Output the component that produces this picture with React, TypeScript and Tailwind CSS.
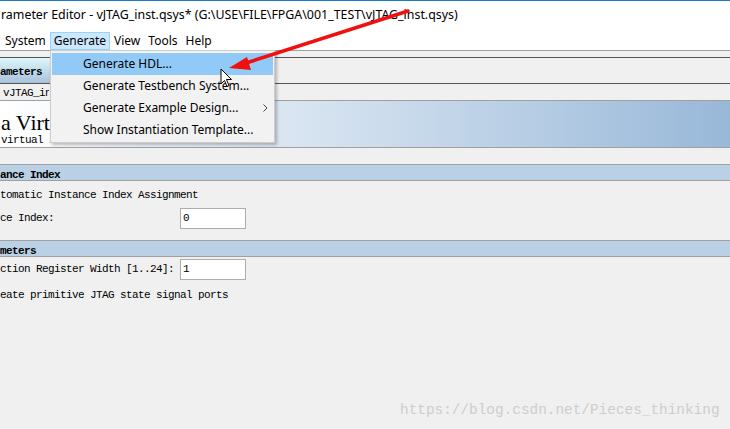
const ui = "font-['Noto_Sans','Liberation_Sans',sans-serif]";
const mono = "font-['Liberation_Mono','DejaVu_Sans_Mono',monospace]";

const menuItems = ["System", "Generate", "View", "Tools", "Help"];

const dropdownItems = [
  { label: "Generate HDL...", active: true },
  { label: "Generate Testbench System..." },
  { label: "Generate Example Design...", submenu: true },
  { label: "Show Instantiation Template..." },
];

function SectionHeader({ title }: { title: string }) {
  return (
    <div className="h-[17px] border-y border-[#a0a0a0] bg-[#b9d0e5] leading-[15px]">
      <span className={`${mono} text-[11px] font-bold tracking-[-0.6px] text-black`}>{title}</span>
    </div>
  );
}

function Field({ label, value }: { label: string; value: string }) {
  return (
    <div className="flex h-[21px] items-center">
      <span className={`${mono} w-[180px] text-[11px] tracking-[-0.6px] text-black`}>{label}</span>
      <div className="flex h-[21px] w-[66px] items-center border border-[#adadad] bg-white pl-[2px]">
        <span className={`${mono} text-[11px] text-black`}>{value}</span>
      </div>
    </div>
  );
}

function Dropdown() {
  return (
    <div className="absolute left-[50px] top-[50px] w-[225px] border border-[#cccccc] bg-[#f2f2f2] px-[1px] pb-[1px] pt-[2px] shadow-[2px_2px_3px_rgba(0,0,0,0.25)]">
      {dropdownItems.map((item) => (
        <div
          key={item.label}
          className={`relative flex h-[22px] items-center pl-[31px] ${ui} text-[12px] text-black ${
            item.active ? "bg-[#91c9f7]" : ""
          }`}
        >
          {item.label}
          {item.submenu && (
            <svg className="absolute right-[5px] top-[7px]" width="5" height="8" viewBox="0 0 5 8">
              <path d="M0.5 0.5 L4 4 L0.5 7.5" fill="none" stroke="#444" strokeWidth="1" />
            </svg>
          )}
        </div>
      ))}
    </div>
  );
}

export default function App() {
  return (
    <div className="relative h-[429px] w-[730px] overflow-hidden bg-[#f0f0f0]">
      {/* title bar */}
      <div className={`h-[31px] border-t border-[#1979ca] bg-white pl-[1px] pt-[5px] ${ui} text-[12.4px] leading-[18px] text-black`}>
        rameter Editor - vJTAG_inst.qsys* (G:\USE\FILE\FPGA\001_TEST\vJTAG_inst.qsys)
      </div>

      {/* menu bar */}
      <div className="flex h-[19px] items-center bg-white pl-[1px]">
        {menuItems.map((m) => (
          <div
            key={m}
            className={`flex h-[18px] items-center px-[3px] ${ui} text-[12px] text-black ${
              m === "Generate" ? "border border-[#99d1ff] bg-[#cce8ff]" : "border border-transparent"
            }`}
          >
            {m}
          </div>
        ))}
      </div>

      {/* toolbar gap */}
      <div className="h-[7px] border-t border-[#a0a0a0] bg-[#f0f0f0]" />

      {/* tab strip */}
      <div className="flex h-[27px] border-y border-[#555] bg-[#f0f0f0]">
        <div className="flex w-[120px] items-center bg-linear-to-b from-[#dff7fb] to-[#a9c1db] pt-[3px]">
          <span className={`${mono} text-[11px] font-bold tracking-[-0.6px] text-black`}>ameters</span>
        </div>
      </div>

      {/* instance row */}
      <div className="flex h-[17px] items-center border-b border-[#a0a0a0] bg-[#f0f0f0] pt-[2px]">
        <span className={`${mono} w-[49px] overflow-hidden whitespace-nowrap pl-[3px] text-[11px] tracking-[-0.6px] text-black`}>vJTAG_inst</span>
      </div>

      {/* component banner, mostly hidden by the open menu */}
      <div className="h-[47px] border-b border-[#a0a0a0] bg-linear-to-r from-white via-[#cfdeee] to-[#98b8d8] pl-[1px] pt-[11px]">
        <div className="w-[49px] overflow-hidden whitespace-nowrap font-['Liberation_Serif',serif] text-[22px] leading-[22px] text-black">
          a Virtual JTAG
        </div>
        <div className={`${mono} w-[49px] overflow-hidden whitespace-nowrap text-[11px] leading-[13px] tracking-[-0.6px] text-black`}>
          virtual instance
        </div>
      </div>

      <div className="h-[16px]" />

      <SectionHeader title="ance Index" />
      <div className="flex flex-col pt-[7px]">
        <div className={`${mono} h-[14px] text-[11px] leading-[14px] tracking-[-0.6px] text-black`}>
          tomatic Instance Index Assignment
        </div>
        <div className="pt-[6px]">
          <Field label="ce Index:" value="0" />
        </div>
      </div>

      <div className="h-[11px]" />
      <SectionHeader title="meters" />
      <div className="flex flex-col pt-[2px]">
        <Field label="ction Register Width [1..24]:" value="1" />
        <div className={`${mono} pt-[8px] text-[11px] leading-[14px] tracking-[-0.6px] text-black`}>
          eate primitive JTAG state signal ports
        </div>
      </div>

      <Dropdown />

      {/* red annotation arrow */}
      <svg className="absolute left-0 top-0" width="730" height="429" viewBox="0 0 730 429">
        <line x1="408" y1="11" x2="246" y2="63" stroke="#f01010" strokeWidth="3.5" strokeLinecap="round" />
        <polygon points="229,68 247,57 251,70" fill="#f01010" />
      </svg>

      {/* mouse cursor */}
      <svg className="absolute left-[220px] top-[68px]" width="14" height="21" viewBox="0 0 14 21">
        <path d="M1 1 L1 16 L4.5 12.5 L7 18.5 L9 17.5 L6.5 11.5 L11.5 11.5 Z" fill="white" stroke="black" strokeWidth="1" strokeLinejoin="round" />
      </svg>

      {/* watermark */}
      <div className={`${mono} absolute left-[400px] top-[400px] text-[14.4px] text-[#cdcdcd]`}>
        https://blog.csdn.net/Pieces_thinking
      </div>
    </div>
  );
}
